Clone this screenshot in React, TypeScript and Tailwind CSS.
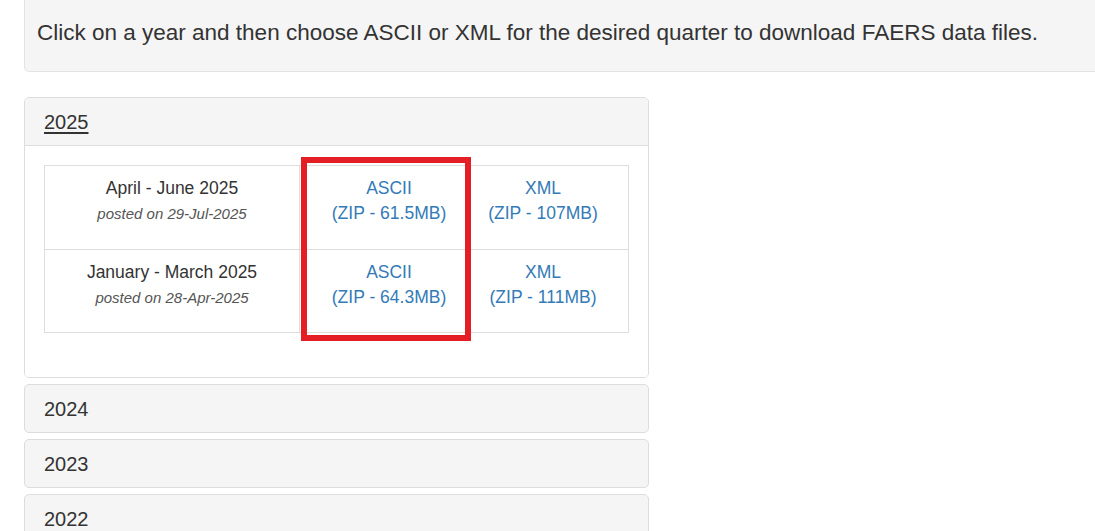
import React from "react";

const rows = [
  { q: "April - June 2025", d: "posted on 29-Jul-2025", a: "(ZIP - 61.5MB)", x: "(ZIP - 107MB)", h: "h-[84px] border-b border-[#ddd]" },
  { q: "January - March 2025", d: "posted on 28-Apr-2025", a: "(ZIP - 64.3MB)", x: "(ZIP - 111MB)", h: "h-[82px]" },
];

export default function App() {
  return (
    <div className="relative w-[1095px] h-[531px] overflow-hidden bg-white text-[#333] font-['Liberation_Sans',Arial,sans-serif]">
      <div className="ml-[24px] h-[72px] bg-[#f5f5f5] border-l border-b border-[#e3e3e3] rounded-bl-[5px] pl-[12px] pt-[17px]">
        <p className="text-[22.5px] leading-[32px] whitespace-nowrap">
          Click on a year and then choose ASCII or XML for the desired quarter to download FAERS data files.
        </p>
      </div>

      <div className="ml-[24px] w-[625px] mt-[25px]">
        <div className="border border-[#ddd] rounded-[5px] overflow-hidden">
          <div className="h-[48px] bg-[#f5f5f5] border-b border-[#ddd] flex items-center pl-[19px]">
            <span className="text-[20px] leading-[22px] underline underline-offset-[3px]">2025</span>
          </div>
          <div className="px-[19px] pt-[19px] pb-[44px] bg-white">
            <div className="border border-[#ddd]">
              {rows.map((r) => (
                <div key={r.q} className={`flex ${r.h}`}>
                  <div className="w-[255px] border-r border-[#ddd] text-center pt-[10px]">
                    <div className="text-[17.5px] leading-[25px]">{r.q}</div>
                    <div className="text-[15px] leading-[25px] italic text-[#555]">{r.d}</div>
                  </div>
                  <div className="w-[168px] pl-[10px] text-center pt-[10px] text-[#337ab7] text-[17.5px] leading-[25px]">
                    <div>ASCII</div>
                    <div>{r.a}</div>
                  </div>
                  <div className="flex-1 pr-[10px] text-center pt-[10px] text-[#337ab7] text-[17.5px] leading-[25px]">
                    <div>XML</div>
                    <div>{r.x}</div>
                  </div>
                </div>
              ))}
            </div>
          </div>
        </div>

        {["2024", "2023", "2022"].map((y) => (
          <div key={y} className="mt-[6px] h-[49px] border border-[#ddd] rounded-[5px] bg-[#f5f5f5] flex items-center pl-[19px]">
            <span className="text-[20px] leading-[22px]">{y}</span>
          </div>
        ))}
      </div>

      <div className="absolute left-[301px] top-[157px] w-[170px] h-[184px] border-[6px] border-[#e31e24]" />
    </div>
  );
}
